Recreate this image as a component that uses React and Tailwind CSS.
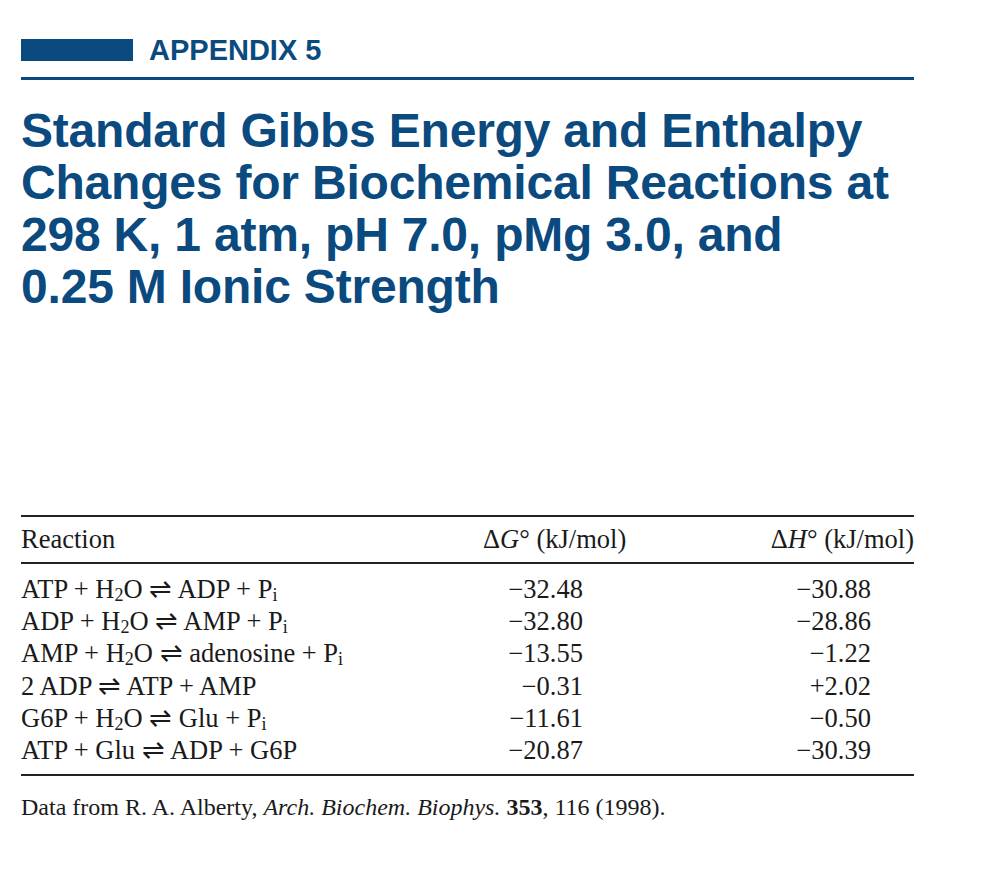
import React from 'react';

const rows = [
    { r: <>ATP + H<sub>2</sub>O ⇌ ADP + P<sub>i</sub></>, g: '−32.48', h: '−30.88' },
    { r: <>ADP + H<sub>2</sub>O ⇌ AMP + P<sub>i</sub></>, g: '−32.80', h: '−28.86' },
    { r: <>AMP + H<sub>2</sub>O ⇌ adenosine + P<sub>i</sub></>, g: '−13.55', h: '−1.22' },
    { r: <>2 ADP ⇌ ATP + AMP</>, g: '−0.31', h: '+2.02' },
    { r: <>G6P + H<sub>2</sub>O ⇌ Glu + P<sub>i</sub></>, g: '−11.61', h: '−0.50' },
    { r: <>ATP + Glu ⇌ ADP + G6P</>, g: '−20.87', h: '−30.39' },
];

const App = () => {
    return (
        <div className="w-[984px] h-[869px] bg-white pl-[21px] pt-[39px]">
            <div className="w-[893px]">
                {/* appendix label */}
                <div className="flex items-center h-[22px] gap-[16px]">
                    <div className="w-[112px] h-[22px] bg-[#0a4a7f]" />
                    <span className="font-['Liberation_Sans',Arial,sans-serif] font-bold text-[29px] leading-none text-[#0a4a7f]">
                        APPENDIX 5
                    </span>
                </div>
                <div className="mt-[16px] h-[3px] bg-[#0a4a7f]" />

                <h1 className="mt-[25px] font-['Liberation_Sans',Arial,sans-serif] font-bold text-[48px] leading-[52px] text-[#0a4a7f] tracking-[-0.2px]">
                    Standard Gibbs Energy and Enthalpy<br />
                    Changes for Biochemical Reactions at<br />
                    298 K, 1 atm, pH 7.0, pMg 3.0, and<br />
                    0.25 M Ionic Strength
                </h1>

                {/* table */}
                <div className="mt-[202px] font-['Liberation_Serif','Times_New_Roman',serif] text-[26.5px] text-[#1a1a1a]">
                    <div className="h-[2px] bg-[#222]" />
                    <div className="flex h-[32px] leading-[32px] mt-[6px]">
                        <div className="w-[462px]">Reaction</div>
                        <div className="flex-1">Δ<span className="italic">G</span>° (kJ/mol)</div>
                        <div className="text-right">Δ<span className="italic">H</span>° (kJ/mol)</div>
                    </div>
                    <div className="h-[2px] bg-[#222] mt-[7px]" />
                    <div className="pt-[9px] pb-[8px]">
                        {rows.map((row, i) => (
                            <div key={i} className="flex h-[32.2px] leading-[32px]">
                                <div className="w-[462px] [&_sub]:text-[18px] [&_sub]:relative [&_sub]:top-[3px] [&_sub]:leading-none">{row.r}</div>
                                <div className="w-[100px] text-right">{row.g}</div>
                                <div className="flex-1 text-right pr-[43px]">{row.h}</div>
                            </div>
                        ))}
                    </div>
                    <div className="h-[2px] bg-[#222]" />
                    <p className="mt-[17px] text-[24px] leading-[28px]">
                        Data from R. A. Alberty, <i>Arch. Biochem. Biophys.</i> <b>353</b>, 116 (1998).
                    </p>
                </div>
            </div>
        </div>
    );
};

export default App;
